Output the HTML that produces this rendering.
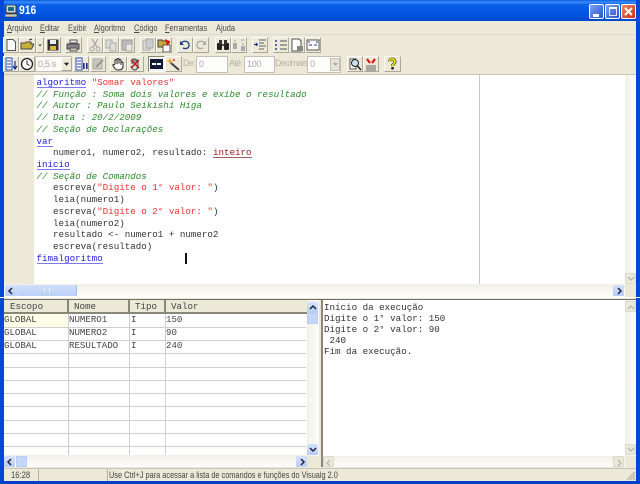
<!DOCTYPE html>
<html><head><meta charset="utf-8"><style>
*{box-sizing:border-box}
html,body{margin:0;padding:0;width:640px;height:484px;overflow:hidden;background:#ece9d8}
.a{position:absolute}
#r{position:relative;width:640px;height:484px;overflow:hidden;background:#ece9d8;font-family:"Liberation Sans",sans-serif;filter:blur(.35px)}
.m{position:absolute;top:22px;font-size:9.3px;color:#4a4a4a;line-height:12px;white-space:nowrap;transform:scaleX(.8);transform-origin:0 0}
.m u{text-decoration:underline}
.c{position:absolute;left:36.5px;font:9.2px/12px "Liberation Mono",monospace;color:#333;white-space:pre}
.k{color:#2020e0;border-bottom:1px solid #7a7af0;display:inline-block;line-height:9px;height:10px}
.t{color:#a02020;border-bottom:1px solid #a06060;display:inline-block;line-height:9px;height:10px}
.g{color:#2e8b2e;font-style:italic}
.s{color:#ee3030}
.g1{position:absolute;font:9.1px/12px "Liberation Mono",monospace;color:#444;white-space:pre}
.o{position:absolute;left:324px;font:9.2px/12px "Liberation Mono",monospace;color:#333;white-space:pre}
.b{position:absolute;width:16px;height:16px;background:#ece9d8;border-top:1px solid #fbfaf5;border-left:1px solid #fbfaf5;border-right:1px solid #aca899;border-bottom:1px solid #aca899}
.b svg{position:absolute;left:0;top:0;width:14px;height:14px}
.h{position:absolute;font-size:8.8px;letter-spacing:-.5px;color:#b5b2a5;line-height:10px;white-space:nowrap}
.f{position:absolute;background:#fdfdfc;border:1px solid #c4c1b4;font-size:9px;letter-spacing:-.3px;color:#aaa;line-height:14px;padding-left:2px}
.sb{position:absolute;width:11px;height:11px;border-radius:1px}
.on{background:linear-gradient(#d5e2fb,#b7ccf7)}
.off{background:#ece9d8;border:1px solid #dcdacb}
.gh{position:absolute;top:300px;height:14px;background:#ece9d8;border-right:2px solid #8a8778;border-bottom:2px solid #8a8778;font:9.2px/13px "Liberation Mono",monospace;color:#444}
.hl{position:absolute;left:4px;width:302px;height:1px;background:#cfcfcf}
.vl{position:absolute;top:314px;width:1px;height:142px;background:#cfcfcf}
</style></head><body><div id="r">
<!-- title -->
<div class="a" style="left:0;top:0;width:640px;height:21px;background:linear-gradient(#0a5be0 0,#3b8cf5 2px,#0a5fe8 5px,#0054e3 14px,#0048c8 21px)"></div>
<div class="a" style="left:0;top:0;width:4px;height:484px;background:#0048d8"></div>
<div class="a" style="left:636px;top:0;width:4px;height:484px;background:#0048d8"></div>
<div class="a" style="left:0;top:481px;width:640px;height:3px;background:#0040c8"></div>
<svg class="a" style="left:5px;top:5px" width="13" height="13"><rect x="1" y="0" width="10" height="8" fill="#d8d8c8" stroke="#333"/><rect x="3" y="2" width="6" height="4" fill="#1a6a8a"/><rect x="0" y="9" width="12" height="3" fill="#c8c8b8" stroke="#333" stroke-width=".6"/></svg>
<div class="a" style="left:19px;top:4px;color:#fff;font-weight:bold;font-size:11.5px;line-height:14px;transform:scaleX(.9);transform-origin:0 0">916</div>
<!-- window buttons -->
<div class="a" style="left:589px;top:4px;width:15px;height:15px;border:1px solid #fff;border-radius:2px;background:linear-gradient(135deg,#7fa2ee,#2a55d0)"><div class="a" style="left:3px;top:9px;width:6px;height:3px;background:#fff"></div></div>
<div class="a" style="left:605px;top:4px;width:15px;height:15px;border:1px solid #fff;border-radius:2px;background:linear-gradient(135deg,#7fa2ee,#2a55d0)"><div class="a" style="left:3px;top:2px;width:8px;height:9px;border:1px solid #dfe8fb;border-top:2px solid #fff"></div></div>
<div class="a" style="left:621px;top:4px;width:15px;height:15px;border:1px solid #fff;border-radius:2px;background:linear-gradient(135deg,#ee8a68,#c83010)"><svg class="a" style="left:1px;top:1px" width="11" height="11"><path d="M2 2L9 9M9 2L2 9" stroke="#fff" stroke-width="2"/></svg></div>
<!-- menu -->
<span class="m" style="left:7px"><u>A</u>rquivo</span>
<span class="m" style="left:40px"><u>E</u>ditar</span>
<span class="m" style="left:68px">E<u>x</u>ibir</span>
<span class="m" style="left:94px"><u>A</u>lgoritmo</span>
<span class="m" style="left:134px"><u>C</u>ódigo</span>
<span class="m" style="left:165px"><u>F</u>erramentas</span>
<span class="m" style="left:216px">A<u>j</u>uda</span>
<div class="a" style="left:4px;top:34px;width:632px;height:1px;background:#dcdad0"></div>
<div class="a" style="left:4px;top:74px;width:632px;height:1px;background:#c8c5b6"></div>
<!-- toolbar 1 -->
<div class="b" style="left:3px;top:37px"><svg viewBox="0 0 14 14"><path d="M3 1.500H9L11.500 4V12.500H3Z" fill="#fff" stroke="#555"/></svg></div>
<div class="b" style="left:19px;top:37px;width:17px"><svg viewBox="0 0 14 14"><path d="M1 11V5H5L6 4H11V6H14L11.500 11Z" fill="#c8b038" stroke="#444"/><path d="M9 2L12 1" stroke="#333"/></svg></div>
<div class="b" style="left:36px;top:37px;width:8px"><svg viewBox="0 0 14 14" style="width:6px"><path d="M3 6H11L7 10Z" fill="#222"/></svg></div>
<div class="b" style="left:45px;top:37px"><svg viewBox="0 0 14 14"><rect x="1.500" y="1.500" width="11" height="11" fill="#333"/><rect x="4" y="2" width="6" height="4" fill="#eee"/><rect x="4" y="8" width="6" height="4" fill="#d8b830"/></svg></div>
<div class="b" style="left:65px;top:37px;width:17px"><svg viewBox="0 0 14 14"><path d="M4 2H11V5H4Z" fill="#eee" stroke="#555"/><path d="M1 6H13V11H1Z" fill="#888" stroke="#444"/><path d="M4 10H11V13H4Z" fill="#ccc" stroke="#555"/></svg></div>
<div class="b" style="left:87px;top:37px"><svg viewBox="0 0 14 14"><path d="M4 1L9 9M10 1L5 9" stroke="#aaa" stroke-width="1.200" fill="none"/><circle cx="4" cy="11" r="2" fill="none" stroke="#aaa"/><circle cx="10" cy="11" r="2" fill="none" stroke="#aaa"/></svg></div>
<div class="b" style="left:103px;top:37px"><svg viewBox="0 0 14 14"><rect x="2" y="2" width="6" height="8" fill="#ddd" stroke="#aaa"/><rect x="6" y="5" width="6" height="8" fill="#ddd" stroke="#aaa"/></svg></div>
<div class="b" style="left:119px;top:37px"><svg viewBox="0 0 14 14"><rect x="2" y="2" width="10" height="10" fill="#bbb" stroke="#999"/><rect x="6" y="6" width="6" height="7" fill="#e8e8e0" stroke="#aaa"/></svg></div>
<div class="b" style="left:140px;top:37px"><svg viewBox="0 0 14 14"><rect x="2" y="3" width="7" height="9" fill="#ddd" stroke="#aaa"/><rect x="5" y="1" width="7" height="9" fill="#ccc" stroke="#aaa"/></svg></div>
<div class="b" style="left:156px;top:37px"><svg viewBox="0 0 14 14"><path d="M1 9V2H5L6 3H10V9Z" fill="#c8a838" stroke="#444"/><rect x="6" y="7" width="7" height="7" fill="#fff" stroke="#555"/><path d="M8 2L12 4L10 7" fill="none" stroke="#e01010" stroke-width="2"/></svg></div>
<div class="b" style="left:177px;top:37px"><svg viewBox="0 0 14 14"><path d="M3 5C6 2 11 3 11 7S7 11 5 10" fill="none" stroke="#1a3a8a" stroke-width="1.300"/><path d="M2 3V7H6Z" fill="#1a3a8a"/></svg></div>
<div class="b" style="left:193px;top:37px"><svg viewBox="0 0 14 14"><path d="M11 5C8 2 3 3 3 7S7 11 9 10" fill="none" stroke="#aaa" stroke-width="1.300"/><path d="M12 3V7H8Z" fill="#aaa"/></svg></div>
<div class="b" style="left:215px;top:37px"><svg viewBox="0 0 14 14"><rect x="1" y="5" width="5" height="7" rx="1" fill="#222"/><rect x="8" y="5" width="5" height="7" rx="1" fill="#222"/><rect x="3" y="2" width="3" height="4" fill="#333"/><rect x="8" y="2" width="3" height="4" fill="#333"/><rect x="6" y="6" width="2" height="2" fill="#555"/></svg></div>
<div class="b" style="left:231px;top:37px"><svg viewBox="0 0 14 14"><rect x="1" y="5" width="4" height="6" fill="#aaa"/><rect x="9" y="8" width="4" height="5" fill="#aaa"/><path d="M9 2H12M3 2V4M11 5V7" stroke="#999"/></svg></div>
<div class="b" style="left:252px;top:37px"><svg viewBox="0 0 14 14"><path d="M6 2H13M6 5H11M6 8H13M6 11H11" stroke="#666"/><path d="M1 6.500H5M3.500 5V8" stroke="#1a3a8a" stroke-width="1.200"/></svg></div>
<div class="b" style="left:273px;top:37px"><svg viewBox="0 0 14 14"><path d="M6 3H13M6 7H13M6 11H13" stroke="#555"/><path d="M2 2V4M2 6V8M2 10V12" stroke="#1a3a9a" stroke-width="1.400"/></svg></div>
<div class="b" style="left:289px;top:37px"><svg viewBox="0 0 14 14"><path d="M2 1H9L11 3V13H2Z" fill="#fff" stroke="#555"/><rect x="7" y="8" width="6" height="5" fill="#888"/></svg></div>
<div class="b" style="left:305px;top:37px"><svg viewBox="0 0 14 14"><rect x="1" y="2" width="12" height="10" fill="#fff" stroke="#555"/><path d="M3 7H6M8 7H11M3 3V5M11 3V5" stroke="#1a3a8a"/></svg></div>
<!-- toolbar 2 -->
<div class="b" style="left:3px;top:56px"><svg viewBox="0 0 14 14"><path d="M2 1H8V13H2Z" fill="#fff" stroke="#2a4ab0"/><path d="M3 4H7M3 7H7M3 10H7" stroke="#2a4ab0"/><path d="M11 4V11M9 9L11 12L13 9" stroke="#1a2a90" fill="none" stroke-width="1.200"/></svg></div>
<div class="b" style="left:19px;top:56px;width:16px"><svg viewBox="0 0 14 14"><circle cx="7" cy="7" r="5.500" fill="#fff" stroke="#222" stroke-width="1.300"/><path d="M7 3.500V7L9.500 8.500" fill="none" stroke="#222"/></svg></div>
<div class="f" style="left:35px;top:56px;width:37px;height:16px;background:#fbfaf6">0,5 s</div>
<div class="b" style="left:61px;top:57px;width:11px;height:14px"><svg viewBox="0 0 14 14" style="width:9px;height:12px"><path d="M3 5H11L7 10Z" fill="#222"/></svg></div>
<div class="b" style="left:73px;top:56px"><svg viewBox="0 0 14 14"><path d="M2 1H8V13H2Z" fill="#fff" stroke="#2a4ab0"/><path d="M3 4H7M3 7H7M3 10H7" stroke="#2a4ab0"/><rect x="9" y="6" width="1.600" height="6" fill="#1a2a90"/><rect x="12" y="6" width="1.600" height="6" fill="#1a2a90"/></svg></div>
<div class="b" style="left:90px;top:56px"><svg viewBox="0 0 14 14"><rect x="2" y="2" width="9" height="10" fill="#c8c8c0" stroke="#aaa"/><path d="M5 10L12 3" stroke="#888" stroke-width="1.500"/></svg></div>
<div class="b" style="left:110px;top:56px;width:17px"><svg viewBox="0 0 14 14"><path d="M4 7V3.500a1 1 0 012 0V7M6 6V2.500a1 1 0 012 0V6M8 6.500V3.500a1 1 0 012 0V8M10 6a1 1 0 012 0V9C12 12 10 13 8 13H7C5 13 4 12 2 8.500 1.500 7.500 3 7 4 8" fill="#fff" stroke="#222"/></svg></div>
<div class="b" style="left:127px;top:56px;width:17px"><svg viewBox="0 0 14 14"><path d="M4 7V3a1 1 0 012 0V6M6 3a1 1 0 012 0V6M8 4a1 1 0 012 0V8C10 12 8 13 7 13 5 13 4 12 3 9" fill="#ddd" stroke="#444"/><path d="M3 3L11 11M11 3L3 11" stroke="#b01818" stroke-width="1.400"/></svg></div>
<div class="b" style="left:148px;top:56px;width:17px;background:#f5f4ec;border-color:#8a8778 #fff #fff #8a8778"><svg viewBox="0 0 14 14"><rect x="1" y="2" width="13" height="10" fill="#101838"/><path d="M3 7H7M8 7H12" stroke="#fff" stroke-width="2"/></svg></div>
<div class="b" style="left:165px;top:56px;width:17px"><svg viewBox="0 0 14 14"><path d="M5 6L13 13" stroke="#444" stroke-width="2"/><path d="M4 1L5 3.500 7.500 4 5 5 4 7.500 3 5 .5 4 3 3.500Z" fill="#f0a020"/><circle cx="8" cy="3" r="1" fill="#e03030"/></svg></div>
<div class="h" style="left:183px;top:58px">De:</div>
<div class="f" style="left:196px;top:56px;width:32px;height:17px;line-height:15px">0</div>
<div class="h" style="left:229px;top:58px">Até:</div>
<div class="f" style="left:244px;top:56px;width:31px;height:17px;line-height:15px">100</div>
<div class="h" style="left:275px;top:58px">Decimais:</div>
<div class="f" style="left:307px;top:56px;width:34px;height:17px;line-height:15px">0</div>
<div class="a" style="left:330px;top:58px;width:10px;height:13px;background:#e6e3d6;border:1px solid #c4c1b4"><svg class="a" style="left:1px;top:3px" width="7" height="5"><path d="M1 1H6L3.500 4Z" fill="#aaa"/></svg></div>
<div class="b" style="left:347px;top:56px"><svg viewBox="0 0 14 14"><path d="M2 2H8V12H2Z" fill="#fff" stroke="#555"/><circle cx="7" cy="6" r="3.500" fill="#cde" stroke="#222"/><path d="M9.500 9L13 13" stroke="#222" stroke-width="1.500"/></svg></div>
<div class="b" style="left:363px;top:56px"><svg viewBox="0 0 14 14"><path d="M2 9H12M2 11H12M2 13H12" stroke="#666"/><path d="M3 2L6 6M11 2L8 6" stroke="#e01010" stroke-width="2.200"/></svg></div>
<div class="b" style="left:384px;top:56px;width:17px"><svg viewBox="0 0 14 14"><path d="M4.500 4.500C4.500 1.500 10 1 10 4.500 10 7 7.500 6.500 7.500 9" fill="none" stroke="#333" stroke-width="3"/><path d="M4.500 4.500C4.500 1.500 10 1 10 4.500 10 7 7.500 6.500 7.500 9" fill="none" stroke="#f0dc10" stroke-width="1.800"/><rect x="6.300" y="10" width="2.500" height="2.500" fill="#222"/></svg></div>
<!-- editor -->
<div class="a" style="left:4px;top:75px;width:30px;height:209px;background:#ece9d8"></div>
<div class="a" style="left:34px;top:75px;width:591px;height:209px;background:#fff"></div>
<div class="a" style="left:479px;top:75px;width:1px;height:209px;background:#c8c8c8"></div>
<div class="a" style="left:625px;top:75px;width:11px;height:209px;background:linear-gradient(90deg,#f3f1e6,#fdfdfa)"></div>
<div class="c" style="top:77px"><span class="k">algoritmo</span> <span class="s">"Somar valores"</span></div>
<div class="c g" style="top:89px">// Função : Soma dois valores e exibe o resultado</div>
<div class="c g" style="top:100px">// Autor : Paulo Seikishi Higa</div>
<div class="c g" style="top:112px">// Data : 20/2/2009</div>
<div class="c g" style="top:124px">// Seção de Declarações</div>
<div class="c" style="top:136px"><span class="k">var</span></div>
<div class="c" style="top:147px">   numero1, numero2, resultado: <span class="t">inteiro</span></div>
<div class="c" style="top:159px"><span class="k">inicio</span></div>
<div class="c g" style="top:171px">// Seção de Comandos</div>
<div class="c" style="top:182px">   escreva(<span class="s">"Digite o 1° valor: "</span>)</div>
<div class="c" style="top:194px">   leia(numero1)</div>
<div class="c" style="top:206px">   escreva(<span class="s">"Digite o 2° valor: "</span>)</div>
<div class="c" style="top:218px">   leia(numero2)</div>
<div class="c" style="top:229px">   resultado &lt;- numero1 + numero2</div>
<div class="c" style="top:241px">   escreva(resultado)</div>
<div class="c" style="top:253px"><span class="k">fimalgoritmo</span></div>
<div class="a" style="left:185px;top:253px;width:1.500px;height:11px;background:#111"></div>
<!-- editor scrolls -->
<div class="sb off" style="left:625px;top:273px"><svg class="a" style="left:1px;top:2px" width="8" height="6"><path d="M1 1L4 4L7 1" fill="none" stroke="#bbb" stroke-width="1.500"/></svg></div>
<div class="a" style="left:4px;top:284px;width:621px;height:13px;background:linear-gradient(#f2f0e6,#fdfdfa)"></div>
<div class="sb on" style="left:5px;top:285px"><svg class="a" style="left:2px;top:2px" width="8" height="8"><path d="M5 1L2 4L5 7" fill="none" stroke="#223" stroke-width="1.500"/></svg></div>
<div class="a" style="left:16px;top:285px;width:61px;height:11px;background:linear-gradient(#cfdefb,#bcd0f8);border-radius:2px;border-right:1px solid #9fb6e8"></div>
<div class="a" style="left:44px;top:288px;width:6px;height:5px;border-left:1px solid #eef;border-right:1px solid #eef"></div>
<div class="sb on" style="left:613px;top:285px"><svg class="a" style="left:2px;top:2px" width="8" height="8"><path d="M3 1L6 4L3 7" fill="none" stroke="#223" stroke-width="1.500"/></svg></div>
<div class="a" style="left:0;top:297px;width:640px;height:1px;background:#fff"></div>
<div class="a" style="left:4px;top:299px;width:632px;height:1px;background:#716f64"></div>
<!-- grid -->
<div class="a" style="left:4px;top:314px;width:303px;height:142px;background:#fff"></div>
<div class="gh" style="left:4px;width:65px;padding-left:6px">Escopo</div>
<div class="gh" style="left:69px;width:61px;padding-left:5px">Nome</div>
<div class="gh" style="left:130px;width:36px;padding-left:5px">Tipo</div>
<div class="gh" style="left:166px;width:141px;padding-left:5px;border-right:0">Valor</div>
<div class="a" style="left:4px;top:314px;width:64px;height:13px;background:#fdfde8"></div>
<div class="hl" style="top:327px"></div><div class="hl" style="top:340px"></div><div class="hl" style="top:353px"></div><div class="hl" style="top:367px"></div><div class="hl" style="top:380px"></div><div class="hl" style="top:393px"></div><div class="hl" style="top:406px"></div><div class="hl" style="top:420px"></div><div class="hl" style="top:433px"></div><div class="hl" style="top:446px"></div>
<div class="vl" style="left:68px"></div><div class="vl" style="left:129px"></div><div class="vl" style="left:165px"></div>
<div class="g1" style="left:4px;top:314px">GLOBAL</div><div class="g1" style="left:69px;top:314px">NUMERO1</div><div class="g1" style="left:131px;top:314px">I</div><div class="g1" style="left:166px;top:314px">150</div>
<div class="g1" style="left:4px;top:327px">GLOBAL</div><div class="g1" style="left:69px;top:327px">NUMERO2</div><div class="g1" style="left:131px;top:327px">I</div><div class="g1" style="left:166px;top:327px">90</div>
<div class="g1" style="left:4px;top:340px">GLOBAL</div><div class="g1" style="left:69px;top:340px">RESULTADO</div><div class="g1" style="left:131px;top:340px">I</div><div class="g1" style="left:166px;top:340px">240</div>
<!-- grid scrolls -->
<div class="a" style="left:307px;top:300px;width:12px;height:156px;background:linear-gradient(90deg,#f3f1e6,#fdfdfa)"></div>
<div class="sb on" style="left:307px;top:302px"><svg class="a" style="left:2px;top:2px" width="8" height="7"><path d="M1 5L4 2L7 5" fill="none" stroke="#223" stroke-width="1.500"/></svg></div>
<div class="a" style="left:307px;top:313px;width:11px;height:11px;background:#c6d6f9;border:1px solid #b8ccf6"></div>
<div class="sb on" style="left:307px;top:444px"><svg class="a" style="left:2px;top:2px" width="8" height="7"><path d="M1 2L4 5L7 2" fill="none" stroke="#223" stroke-width="1.500"/></svg></div>
<div class="a" style="left:4px;top:455px;width:303px;height:12px;background:linear-gradient(#f2f0e6,#fdfdfa)"></div>
<div class="sb on" style="left:4px;top:456px"><svg class="a" style="left:2px;top:2px" width="8" height="8"><path d="M5 1L2 4L5 7" fill="none" stroke="#223" stroke-width="1.500"/></svg></div>
<div class="a" style="left:16px;top:456px;width:11px;height:11px;background:#c6d6f9;border:1px solid #b8ccf6"></div>
<div class="sb on" style="left:296px;top:456px"><svg class="a" style="left:2px;top:2px" width="8" height="8"><path d="M3 1L6 4L3 7" fill="none" stroke="#223" stroke-width="1.500"/></svg></div>
<!-- output -->
<div class="a" style="left:321px;top:300px;width:2px;height:167px;background:#8a8778"></div>
<div class="a" style="left:323px;top:300px;width:302px;height:156px;background:#fff"></div>
<div class="a" style="left:625px;top:300px;width:11px;height:156px;background:linear-gradient(90deg,#f3f1e6,#fdfdfa)"></div>
<div class="o" style="top:302px">Início da execução</div>
<div class="o" style="top:313px">Digite o 1° valor: 150</div>
<div class="o" style="top:324px">Digite o 2° valor: 90</div>
<div class="o" style="top:335px"> 240</div>
<div class="o" style="top:346px">Fim da execução.</div>
<div class="sb off" style="left:625px;top:301px"><svg class="a" style="left:1px;top:2px" width="8" height="6"><path d="M1 5L4 2L7 5" fill="none" stroke="#bbb" stroke-width="1.500"/></svg></div>
<div class="sb off" style="left:625px;top:444px"><svg class="a" style="left:1px;top:2px" width="8" height="6"><path d="M1 1L4 4L7 1" fill="none" stroke="#bbb" stroke-width="1.500"/></svg></div>
<div class="a" style="left:323px;top:456px;width:302px;height:11px;background:linear-gradient(#f2f0e6,#fdfdfa)"></div>
<div class="sb off" style="left:323px;top:456px"><svg class="a" style="left:1px;top:2px" width="8" height="8"><path d="M5 1L2 4L5 7" fill="none" stroke="#bbb" stroke-width="1.500"/></svg></div>
<div class="sb off" style="left:613px;top:456px"><svg class="a" style="left:1px;top:2px" width="8" height="8"><path d="M3 1L6 4L3 7" fill="none" stroke="#bbb" stroke-width="1.500"/></svg></div>
<!-- status -->
<div class="a" style="left:4px;top:468px;width:632px;height:1px;background:#c8c5b6"></div>
<div class="a" style="left:38px;top:469px;width:1px;height:12px;background:#b5b2a3"></div>
<div class="a" style="left:107px;top:469px;width:1px;height:12px;background:#b5b2a3"></div>
<div class="a" style="left:11px;top:470px;font-size:9px;line-height:11px;color:#444;transform:scaleX(.85);transform-origin:0 0">16:28</div>
<div class="a" style="left:109px;top:470px;font-size:9.200px;line-height:11px;color:#444;white-space:nowrap;transform:scaleX(.8);transform-origin:0 0">Use Ctrl+J para acessar a lista de comandos e funções do Visualg 2.0</div>
<svg class="a" style="left:626px;top:471px" width="10" height="10"><path d="M9 1L1 9M9 4L4 9M9 7L7 9" stroke="#aca899" stroke-width="1"/></svg>
</div></body></html>
